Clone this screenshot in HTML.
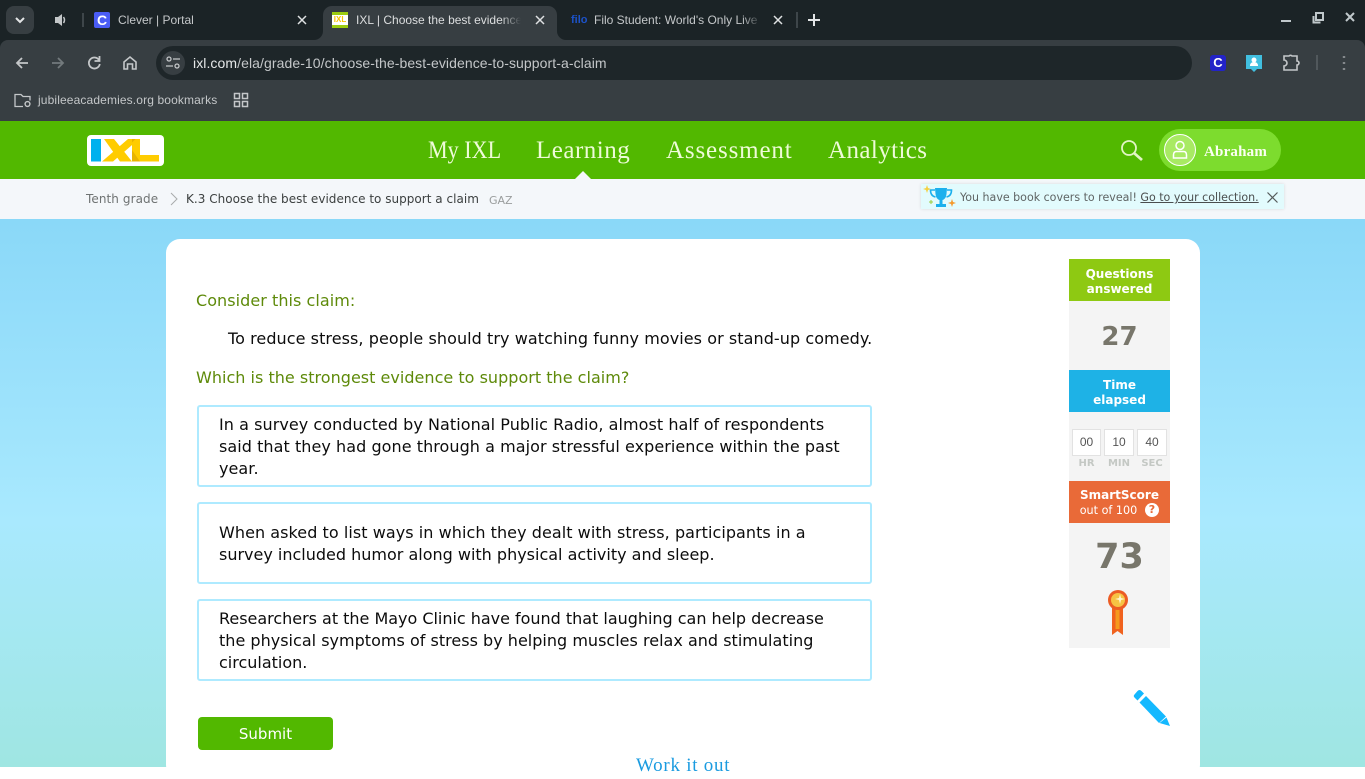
<!DOCTYPE html>
<html><head><meta charset="utf-8"><style>
html,body{margin:0;padding:0;width:1365px;height:767px;overflow:hidden;background:#fff}
*{box-sizing:border-box}
.a{position:absolute;white-space:nowrap}
.c{font-family:"Liberation Sans",sans-serif;font-size:12px;color:#c4c7c9}
.d{font-family:"DejaVu Sans",sans-serif}
.s{font-family:"Liberation Serif","DejaVu Serif",serif}
.nav{font-family:"Liberation Serif",serif;font-size:25px;color:#eefbd8;top:137px;transform-origin:0 50%}
.opt{position:absolute;left:197px;width:675px;border:2px solid #aeeaff;border-radius:3px;background:#fff;font:16px/22px "DejaVu Sans",sans-serif;color:#0c0c0c;padding-left:20px}
.hd{position:absolute;left:1069px;width:101px;height:42px;color:#fff;text-align:center;font:bold 12px/15px "DejaVu Sans",sans-serif;padding-top:8px}
.bx{position:absolute;top:429px;height:27px;background:#fff;border:1px solid #e2e2e2;font:12px/25px "Liberation Sans",sans-serif;color:#555;text-align:center}
.lb{position:absolute;top:457px;font:bold 10px/13px "DejaVu Sans",sans-serif;color:#c4c8c4;text-align:center}
.f{-webkit-mask-image:linear-gradient(90deg,#000 88%,transparent 100%);mask-image:linear-gradient(90deg,#000 88%,transparent 100%)}
</style></head><body>
<div class="a" style="left:0;top:0;width:1365px;height:50px;background:#1b2326"></div>
<div class="a" style="left:0;top:40px;width:1365px;height:81px;background:#373e42;border-radius:8px 8px 0 0"></div>
<div class="a" style="left:313px;top:30px;width:254px;height:10px;background:#373e42"></div>
<div class="a" style="left:300px;top:20px;width:23px;height:20px;background:#1b2326;border-radius:0 0 9px 0"></div>
<div class="a" style="left:557px;top:20px;width:23px;height:20px;background:#1b2326;border-radius:0 0 0 9px"></div>
<div class="a" style="left:323px;top:6px;width:234px;height:34px;background:#373e42;border-radius:9px 9px 0 0"></div>
<div class="a" style="left:6px;top:6px;width:28px;height:28px;background:#373e42;border-radius:8px"></div>
<svg class="a" style="left:0;top:0" width="1365" height="121" fill="none" stroke="#c4c7c9" stroke-width="1.5">
<path d="M16 18l4 4 4-4" stroke="#e3e5e6" stroke-width="2"/>
<path d="M55 17h3l4-3v12l-4-3h-3z" fill="#c4c7c9" stroke="none"/><path d="M63.500 17q2 3 0 6"/>
<path d="M83 13v14" stroke="#4b5256"/>
<path d="M298 16l8 8m0-8l-8 8M536 16l8 8m0-8l-8 8M774 16l8 8m0-8l-8 8" stroke="#dfe1e2"/>
<path d="M797 12v16" stroke="#4b5256"/>
<path d="M814 14v12m-6-6h12" stroke="#e3e5e6" stroke-width="2"/>
<path d="M1281 21h10" stroke="#c0c8cb" stroke-width="2"/>
<path d="M1316 13h7v7h-7zM1313.500 16v6.500h7" stroke="#c0c8cb" stroke-width="2"/>
<path d="M1346 13l8 8m0-8l-8 8" stroke="#c0c8cb" stroke-width="2"/>
<path d="M28 63H17m5-5l-5 5 5 5" stroke-width="1.800"/>
<path d="M63 63H52m6-5l5 5-5 5" stroke="#737a7d" stroke-width="1.800"/>
<path d="M99 60a5.500 5.500 0 1 0 .8 4M99.500 56v5h-5" stroke-width="1.800"/>
<path d="M124 62l6-5 6 5v7h-3.500v-5h-5v5H124z" stroke-width="1.600"/>
<path d="M23 106.500H15v-12h6l2 2h7v4" stroke-width="1.300"/><circle cx="27.500" cy="104" r="2.400" stroke-width="1.400"/>
<path d="M234.500 93.500h5v5h-5zM242.500 93.500h5v5h-5zM234.500 101.500h5v5h-5zM242.500 101.500h5v5h-5z" stroke-width="1.500"/>
<path d="M1284 56h5a2 2 0 0 1 3 0h5v5a2 2 0 0 1 0 4v5h-13v-4a2 2 0 0 0 0-6z" stroke-width="1.600"/>
<path d="M1317 55v15" stroke="#5a6165"/>
<path d="M1344 56.500v1m0 5v1m0 5v1" stroke="#d0d3d5" stroke-width="2.400"/>
</svg>
<div class="a" style="left:94px;top:12px;width:16px;height:16px;background:#4a5cf5;border-radius:2px;color:#fff;font:bold 14px/16px 'Liberation Sans',sans-serif;text-align:center">C</div>
<div class="a c" style="left:118px;top:13px">Clever | Portal</div>
<div class="a" style="left:332px;top:12px;width:16px;height:16px;background:#fff;border-top:3px solid #9ccc10;border-bottom:3px solid #9ccc10;color:#f8c400;font:bold 8px/10px 'Liberation Sans',sans-serif;text-align:center">IXL</div>
<div class="a c f" style="left:356px;top:13px;width:165px;overflow:hidden;color:#dcdedf">IXL | Choose the best evidence t</div>
<div class="a" style="left:571px;top:13px;font:bold 11px/14px 'Liberation Sans',sans-serif;color:#1c52c9">filo</div>
<div class="a c f" style="left:594px;top:13px;width:168px;overflow:hidden">Filo Student: World's Only Live I</div>
<div class="a" style="left:156px;top:46px;width:1036px;height:34px;background:#1e2629;border-radius:17px"></div>
<div class="a" style="left:161px;top:51px;width:24px;height:24px;background:#373e42;border-radius:12px"></div>
<svg class="a" style="left:165px;top:55px" width="16" height="16" fill="none" stroke="#c4c7c9" stroke-width="1.300"><circle cx="4" cy="4" r="2"/><path d="M8 4h7M1 11h7"/><circle cx="12" cy="11" r="2"/></svg>
<div class="a" style="left:193px;top:54px;font:14px/18px 'Liberation Sans',sans-serif;color:#c4c7c9;letter-spacing:.08px"><span style="color:#e6e8e9">ixl.com</span>/ela/grade-10/choose-the-best-evidence-to-support-a-claim</div>
<div class="a" style="left:1210px;top:55px;width:16px;height:16px;background:#2323c8;border-radius:3px;color:#fff;font:bold 13px/16px 'Liberation Sans',sans-serif;text-align:center">C</div>
<svg class="a" style="left:1246px;top:55px" width="16" height="17"><path d="M0 0h16v14h-5l-3 3-3-3H0z" fill="#41bfe0"/><circle cx="8" cy="5" r="2.500" fill="#fff"/><path d="M4 11q0-4 4-4t4 4z" fill="#fff"/></svg>
<div class="a c" style="left:38px;top:93px;letter-spacing:.13px">jubileeacademies.org bookmarks</div>

<div class="a" style="left:0;top:121px;width:1365px;height:58px;background:#52b800"></div>
<div class="a" style="left:87px;top:135px;width:77px;height:31px;background:#fff;border-radius:4px"></div>
<svg class="a" style="left:84px;top:132px" width="84" height="36" viewBox="84 132 84 36">
<rect x="91" y="139" width="10" height="22.500" fill="#00b1ee"/>
<path d="M104 139h10l18 22.500h-12zM128 139h11l-26 22.500h-11z" fill="#ffcc00"/>
<path d="M132 139h8v16h19v6.500h-27z" fill="#ffcc00"/>
<path d="M132 139h3.500l-3.500 3.500zM132 150l8 11.500h-8z" fill="#e8b400"/>
</svg>
<div class="a nav" style="left:428px;transform:scaleX(.885)">My IXL</div>
<div class="a nav" style="left:536px;letter-spacing:.5px">Learning</div>
<div class="a nav" style="left:666px;letter-spacing:.85px">Assessment</div>
<div class="a nav" style="left:828px;letter-spacing:.4px">Analytics</div>
<svg class="a" style="left:575px;top:171px" width="16" height="8"><path d="M0 8l8-8 8 8z" fill="#f4f7fa"/></svg>
<svg class="a" style="left:1119px;top:138px" width="26" height="26" fill="none" stroke="#e2f5c4" stroke-width="1.800"><circle cx="10" cy="10" r="7"/><path d="M15 15l8 7" stroke-width="2.800"/></svg>
<div class="a" style="left:1159px;top:129px;width:122px;height:42px;background:#7ddc2e;border-radius:21px"></div>
<div class="a" style="left:1164px;top:134px;width:32px;height:32px;background:#a8ea63;border:1px solid #fff;border-radius:50%"></div>
<svg class="a" style="left:1172px;top:140px" width="16" height="20" fill="none" stroke="#fff" stroke-width="1.500"><circle cx="8" cy="5.500" r="4"/><path d="M1.500 18v-3q0-3.500 3-3.500h7q3 0 3 3.500v3z"/></svg>
<div class="a s" style="left:1204px;top:143px;font-size:15px;line-height:18px;font-weight:bold;color:#fbfff2;letter-spacing:.2px">Abraham</div>

<div class="a" style="left:0;top:179px;width:1365px;height:40px;background:#f4f7fa"></div>
<div class="a d" style="left:86px;top:192px;font-size:12px;line-height:15px;color:#6f7373;letter-spacing:.08px">Tenth grade</div>
<svg class="a" style="left:169px;top:192px" width="10" height="14" fill="none" stroke="#a8abab"><path d="M2 1l6 6-6 6"/></svg>
<div class="a d" style="left:186px;top:192px;font-size:12px;line-height:15px;color:#3c4040;letter-spacing:.02px">K.3 Choose the best evidence to support a claim</div>
<div class="a d" style="left:489px;top:193px;font-size:11px;line-height:15px;color:#9a9d9d">GAZ</div>
<div class="a" style="left:921px;top:184px;width:363px;height:25px;background:#e2fbfd;box-shadow:0 0 3px rgba(0,0,0,.12)"></div>
<svg class="a" style="left:922px;top:184px" width="36" height="26"><path d="M13 4h12l-.5 6q-.5 5-4 6v4h3.500v3h-10v-3h3.500v-4q-3.500-1-4-6z" fill="#1cb0ed"/><path d="M13 6H8.500q0 6 5 7M25 6h4.500q0 6-5 7" fill="none" stroke="#1cb0ed" stroke-width="1.600"/><path d="M5 1l1 3 3 1-3 1-1 3-1-3-3-1 3-1z" fill="#f5d040"/><path d="M30 15l1 3 3 1-3 1-1 3-1-3-3-1 3-1z" fill="#f59a2c"/><path d="M9 16v4m-2-2h4" stroke="#9ccc3a"/></svg>
<div class="a d" style="left:960px;top:191px;font-size:11.050px;line-height:14px;color:#5f6464">You have book covers to reveal! <span style="text-decoration:underline;color:#4a4e4e">Go to your collection.</span></div>
<svg class="a" style="left:1266px;top:191px" width="13" height="13" stroke="#555b5b" stroke-width="1.200"><path d="M1.500 1.500l10 10m0-10l-10 10"/></svg>

<div class="a" style="left:0;top:219px;width:1365px;height:548px;background:linear-gradient(#8ad8f8 0,#a9e9fe 55%,#9fe6e2 100%)"></div>
<div class="a" style="left:166px;top:239px;width:1034px;height:540px;background:#fff;border-radius:14px"></div>
<div class="a d" style="left:196px;top:291px;font-size:16px;line-height:20px;color:#5e8a0a;letter-spacing:.05px">Consider this claim:</div>
<div class="a d" style="left:228px;top:329px;font-size:16px;line-height:20px;color:#0c0c0c;letter-spacing:.065px">To reduce stress, people should try watching funny movies or stand-up comedy.</div>
<div class="a d" style="left:196px;top:368px;font-size:16px;line-height:20px;color:#5e8a0a;letter-spacing:.02px">Which is the strongest evidence to support the claim?</div>
<div class="opt" style="top:405px;height:82px;padding-top:7px;letter-spacing:.055px">In a survey conducted by National Public Radio, almost half of respondents<br>said that they had gone through a major stressful experience within the past<br>year.</div>
<div class="opt" style="top:502px;height:82px;padding-top:18px"><span style="letter-spacing:.055px">When asked to list ways in which they dealt with stress, participants in a</span><br>survey included humor along with physical activity and sleep.</div>
<div class="opt" style="top:599px;height:82px;padding-top:7px"><span style="letter-spacing:-.015px">Researchers at the Mayo Clinic have found that laughing can help decrease</span><br><span style="letter-spacing:.014px">the physical symptoms of stress by helping muscles relax and stimulating</span><br>circulation.</div>
<div class="a d" style="left:198px;top:717px;width:135px;height:33px;background:#52b800;border-radius:4px;color:#fff;font-size:15px;line-height:34px;text-align:center">Submit</div>
<div class="a s" style="left:636px;top:756px;font-size:19px;line-height:20px;color:#1a9be0;letter-spacing:.75px">Work it out</div>

<div class="a" style="left:1069px;top:301px;width:101px;height:69px;background:#f4f4f4"></div>
<div class="hd" style="top:259px;background:#8ec912">Questions<br>answered</div>
<div class="a d" style="left:1069px;top:319px;width:101px;text-align:center;font-size:26px;font-weight:bold;line-height:36px;color:#78766b">27</div>
<div class="hd" style="top:370px;background:#1eb2e6">Time<br>elapsed</div>
<div class="a" style="left:1069px;top:412px;width:101px;height:69px;background:#f4f4f4"></div>
<div class="bx" style="left:1072px;width:29px">00</div>
<div class="bx" style="left:1104px;width:30px">10</div>
<div class="bx" style="left:1137px;width:30px">40</div>
<div class="lb" style="left:1072px;width:29px">HR</div>
<div class="lb" style="left:1104px;width:30px">MIN</div>
<div class="lb" style="left:1137px;width:30px">SEC</div>
<div class="hd" style="top:481px;background:#e96a38;padding-top:7px">SmartScore<br><span style="font-weight:normal;font-size:11.200px;position:relative;left:-11px">out of 100</span></div>
<div class="a" style="left:1145px;top:503px;width:14px;height:14px;border-radius:50%;background:#fff;color:#e96a38;font:bold 11px/14px 'DejaVu Sans',sans-serif;text-align:center">?</div>
<div class="a" style="left:1069px;top:523px;width:101px;height:125px;background:#f4f4f4"></div>
<div class="a d" style="left:1069px;top:534px;width:101px;text-align:center;font-size:35px;font-weight:bold;line-height:46px;color:#78766b">73</div>
<svg class="a" style="left:1107px;top:589px" width="22" height="47"><path d="M5 16h11v30l-5.500-4-5.500 4z" fill="#f0621e"/><path d="M8.500 16h4v24h-4z" fill="#f59a1e"/><circle cx="11" cy="11" r="10" fill="#ec5c24"/><circle cx="11" cy="11" r="7" fill="#f6c344"/><path d="M13 5l1 4 4 1-4 1-1 4-1-4-4-1 4-1z" fill="#fff6d0"/></svg>
<svg class="a" style="left:1125px;top:684px" width="50" height="46" viewBox="1125 684 50 46" fill="#14b9ff"><path d="M1146 696l20 20.500-7 6.500-19.500-20.500z"/><path d="M1166.500 717.500l3.500 8.500-10.500-3z"/><path d="M1134.500 694.500l3-3.500q2-2 4 0l2.500 2.500-6.500 7-3-3q-1.500-1.500 0-3z"/></svg>
</body></html>
